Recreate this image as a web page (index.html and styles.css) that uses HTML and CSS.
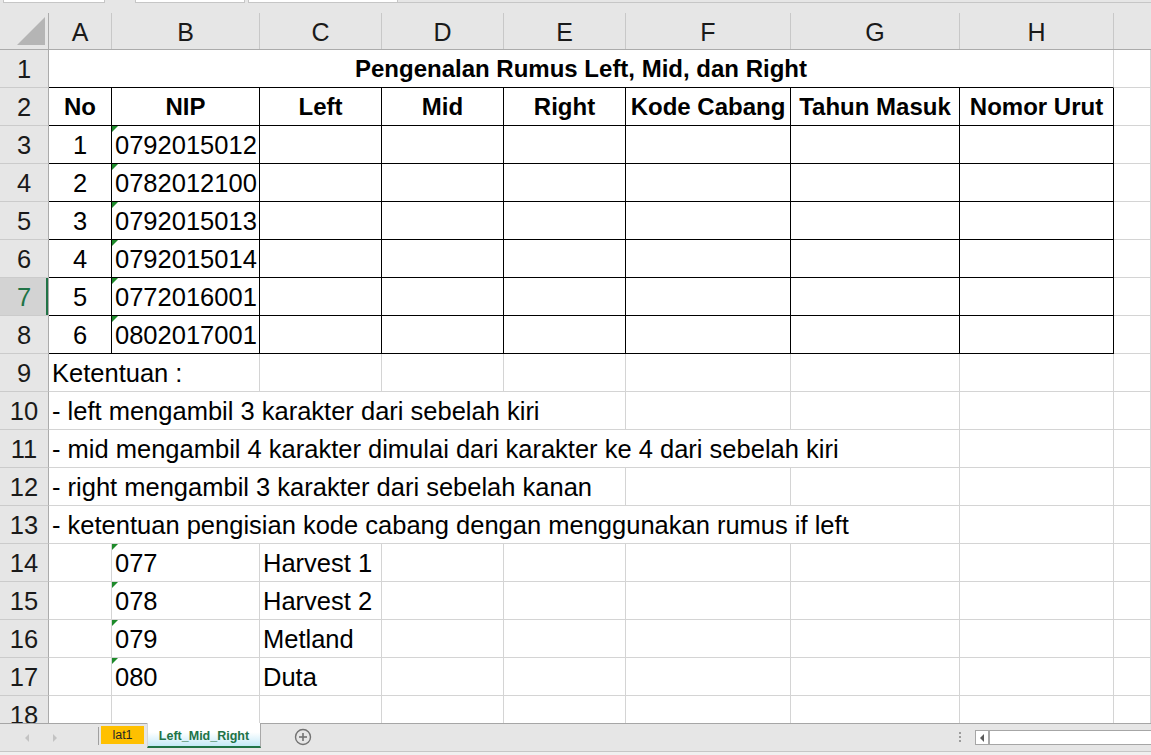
FILE: index.html
```html
<!DOCTYPE html>
<html>
<head>
<meta charset="utf-8">
<title>Left_Mid_Right</title>
<link rel="stylesheet" href="styles.css">
</head>
<body>
<div class="app">
  <div class="topstrip">
    <div class="tbox tbox1"></div>
    <div class="tbox tbox2"></div>
    <div class="tbox tbox3"></div>
    <div class="tline"></div>
  </div>

  <div class="sheet">
    <!-- column headers -->
    <div class="ch"><div class="chi corner"><svg class="corner-tri" width="48" height="35" viewBox="0 0 48 35"><polygon points="17,32 45,4 45,32" fill="#b5b5b5"/></svg></div></div>
    <div class="ch"><div class="chi">A</div></div>
    <div class="ch"><div class="chi">B</div></div>
    <div class="ch"><div class="chi">C</div></div>
    <div class="ch"><div class="chi">D</div></div>
    <div class="ch"><div class="chi">E</div></div>
    <div class="ch"><div class="chi">F</div></div>
    <div class="ch"><div class="chi">G</div></div>
    <div class="ch"><div class="chi">H</div></div>
    <div class="ch"><div class="chi nosep"></div></div>

    <!-- row 1 -->
    <div class="rh">1</div>
    <div class="c span8 title">Pengenalan Rumus Left, Mid, dan Right</div>
    <div class="c"></div>

    <!-- row 2 -->
    <div class="rh">2</div>
    <div class="c t hd">No</div>
    <div class="c t hd">NIP</div>
    <div class="c t hd">Left</div>
    <div class="c t hd">Mid</div>
    <div class="c t hd">Right</div>
    <div class="c t hd">Kode Cabang</div>
    <div class="c t hd">Tahun Masuk</div>
    <div class="c t hd">Nomor Urut</div>
    <div class="c"></div>

    <!-- row 3 -->
    <div class="rh">3</div>
    <div class="c t ctr">1</div>
    <div class="c t tri">0792015012</div>
    <div class="c t"></div><div class="c t"></div><div class="c t"></div><div class="c t"></div><div class="c t"></div><div class="c t"></div>
    <div class="c"></div>

    <!-- row 4 -->
    <div class="rh">4</div>
    <div class="c t ctr">2</div>
    <div class="c t tri">0782012100</div>
    <div class="c t"></div><div class="c t"></div><div class="c t"></div><div class="c t"></div><div class="c t"></div><div class="c t"></div>
    <div class="c"></div>

    <!-- row 5 -->
    <div class="rh">5</div>
    <div class="c t ctr">3</div>
    <div class="c t tri">0792015013</div>
    <div class="c t"></div><div class="c t"></div><div class="c t"></div><div class="c t"></div><div class="c t"></div><div class="c t"></div>
    <div class="c"></div>

    <!-- row 6 -->
    <div class="rh">6</div>
    <div class="c t ctr">4</div>
    <div class="c t tri">0792015014</div>
    <div class="c t"></div><div class="c t"></div><div class="c t"></div><div class="c t"></div><div class="c t"></div><div class="c t"></div>
    <div class="c"></div>

    <!-- row 7 -->
    <div class="rh rh-active">7</div>
    <div class="c t ctr">5</div>
    <div class="c t tri">0772016001</div>
    <div class="c t"></div><div class="c t"></div><div class="c t"></div><div class="c t"></div><div class="c t"></div><div class="c t"></div>
    <div class="c"></div>

    <!-- row 8 -->
    <div class="rh">8</div>
    <div class="c t ctr">6</div>
    <div class="c t tri">0802017001</div>
    <div class="c t"></div><div class="c t"></div><div class="c t"></div><div class="c t"></div><div class="c t"></div><div class="c t"></div>
    <div class="c"></div>

    <!-- row 9 -->
    <div class="rh">9</div>
    <div class="c span2">Ketentuan :</div>
    <div class="c"></div><div class="c"></div><div class="c"></div><div class="c"></div><div class="c"></div><div class="c"></div>
    <div class="c"></div>

    <!-- row 10 -->
    <div class="rh">10</div>
    <div class="c span5">- left mengambil 3 karakter dari sebelah kiri</div>
    <div class="c"></div><div class="c"></div><div class="c"></div>
    <div class="c"></div>

    <!-- row 11 -->
    <div class="rh">11</div>
    <div class="c span7">- mid mengambil 4 karakter dimulai dari karakter ke 4 dari sebelah kiri</div>
    <div class="c"></div>
    <div class="c"></div>

    <!-- row 12 -->
    <div class="rh">12</div>
    <div class="c span5">- right mengambil 3 karakter dari sebelah kanan</div>
    <div class="c"></div><div class="c"></div><div class="c"></div>
    <div class="c"></div>

    <!-- row 13 -->
    <div class="rh">13</div>
    <div class="c span7">- ketentuan pengisian kode cabang dengan menggunakan rumus if left</div>
    <div class="c"></div>
    <div class="c"></div>

    <!-- row 14 -->
    <div class="rh">14</div>
    <div class="c"></div>
    <div class="c tri">077</div>
    <div class="c">Harvest 1</div>
    <div class="c"></div><div class="c"></div><div class="c"></div><div class="c"></div><div class="c"></div>
    <div class="c"></div>

    <!-- row 15 -->
    <div class="rh">15</div>
    <div class="c"></div>
    <div class="c tri">078</div>
    <div class="c">Harvest 2</div>
    <div class="c"></div><div class="c"></div><div class="c"></div><div class="c"></div><div class="c"></div>
    <div class="c"></div>

    <!-- row 16 -->
    <div class="rh">16</div>
    <div class="c"></div>
    <div class="c tri">079</div>
    <div class="c">Metland</div>
    <div class="c"></div><div class="c"></div><div class="c"></div><div class="c"></div><div class="c"></div>
    <div class="c"></div>

    <!-- row 17 -->
    <div class="rh">17</div>
    <div class="c"></div>
    <div class="c tri">080</div>
    <div class="c">Duta</div>
    <div class="c"></div><div class="c"></div><div class="c"></div><div class="c"></div><div class="c"></div>
    <div class="c"></div>

    <!-- row 18 -->
    <div class="rh">18</div>
    <div class="c"></div><div class="c"></div><div class="c"></div><div class="c"></div><div class="c"></div><div class="c"></div><div class="c"></div><div class="c"></div>
    <div class="c"></div>
  </div>

  <div class="tabbar">
    <div class="nav">
      <svg class="nav-arrow" width="8" height="10" viewBox="0 0 8 10"><polygon points="6,1 2,5 6,9" fill="#c3c3c3"/></svg>
      <svg class="nav-arrow" width="8" height="10" viewBox="0 0 8 10"><polygon points="2,1 6,5 2,9" fill="#c3c3c3"/></svg>
    </div>
    <div class="tabsep"></div>
    <div class="tab tab-lat1">lat1</div>
    <div class="tab tab-active">Left_Mid_Right</div>
    <div class="addsheet">
      <svg width="18" height="18" viewBox="0 0 18 18"><circle cx="9" cy="9" r="7.5" fill="none" stroke="#727272" stroke-width="1.4"/><line x1="9" y1="5" x2="9" y2="13" stroke="#727272" stroke-width="1.6"/><line x1="5" y1="9" x2="13" y2="9" stroke="#727272" stroke-width="1.6"/></svg>
    </div>
    <div class="spacer"></div>
    <div class="dots"><span></span><span></span><span></span></div>
    <div class="hscroll">
      <div class="hs-btn"><svg width="8" height="10" viewBox="0 0 8 10"><polygon points="6,1 2,5 6,9" fill="#5a5a5a"/></svg></div>
      <div class="hs-track"></div>
    </div>
  </div>
  <div class="bottomstrip"></div>
</div>
</body>
</html>
```

FILE: styles.css
```css
* {
  box-sizing: border-box;
}

html, body {
  margin: 0;
  padding: 0;
  background: #ffffff;
}

body {
  width: 1151px;
  height: 755px;
  overflow: hidden;
  font-family: "Liberation Sans", Arial, sans-serif;
  color: #000;
}

.app {
  width: 1151px;
  height: 755px;
  display: flex;
  flex-direction: column;
  overflow: hidden;
}

/* top strip (edge of the formula bar) */
.topstrip {
  height: 3px;
  flex: none;
  display: flex;
  background: #e6e6e6;
}

.tbox {
  height: 3px;
  background: #ffffff;
  border-bottom: 1px solid #c6c6c6;
  border-left: 1px solid #c6c6c6;
  border-right: 1px solid #c6c6c6;
}

.tbox1 {
  margin-left: 3px;
  width: 102px;
}

.tbox2 {
  margin-left: 30px;
  width: 110px;
}

.tbox3 {
  margin-left: 3px;
  width: 150px;
}

.tline {
  flex: 1;
  height: 3px;
  border-bottom: 1px solid #c6c6c6;
}

/* grid */
.sheet {
  flex: none;
  height: 720px;
  overflow: hidden;
  display: grid;
  grid-template-columns: 49px 63px 148px 122px 122px 122px 165px 169px 154px 1fr;
  grid-template-rows: 47px repeat(18, 38px);
  font-size: 25.5px;
}

.ch {
  background: #e6e6e6;
  border-bottom: 1px solid #ababab;
  padding-top: 10px;
}

.chi {
  height: 36px;
  border-right: 1px solid #c8c8c8;
  padding-top: 3px;
  line-height: 33px;
  text-align: center;
  font-size: 25px;
  color: #1a1a1a;
}

.chi.corner {
  border-right-color: #ababab;
  padding-top: 0;
}

.chi.nosep {
  border-right: none;
}

.corner-tri {
  display: block;
}

.rh {
  background: #e6e6e6;
  border-right: 1px solid #ababab;
  border-bottom: 1px solid #cbcbcb;
  text-align: center;
  padding-top: 1px;
  line-height: 36px;
  font-size: 25.5px;
  color: #1a1a1a;
}

.rh-active {
  background: #d3d3d3;
  color: #217346;
  box-shadow: inset -2px 0 0 #217346;
}

.c {
  position: relative;
  border-right: 1px solid #d4d4d4;
  border-bottom: 1px solid #d4d4d4;
  padding: 1px 3px 0 3px;
  line-height: 36px;
  white-space: nowrap;
  overflow: visible;
}

.t {
  border-right-color: #000;
  border-bottom-color: #000;
}

.ctr {
  text-align: center;
}

.hd {
  text-align: center;
  font-weight: bold;
  font-size: 24px;
  padding-left: 0;
  padding-right: 0;
}

.title {
  text-align: center;
  font-weight: bold;
  font-size: 24px;
  border-bottom-color: #000;
}

.span2 { grid-column: span 2; }
.span5 { grid-column: span 5; }
.span7 { grid-column: span 7; }
.span8 { grid-column: span 8; }

.tri::before {
  content: "";
  position: absolute;
  left: 0;
  top: 0;
  width: 0;
  height: 0;
  border-top: 6px solid #1d8a2a;
  border-right: 6px solid transparent;
}

/* sheet tab bar */
.tabbar {
  flex: none;
  height: 29px;
  display: flex;
  align-items: flex-start;
  background: #e6e6e6;
  border-top: 1px solid #a6a6a6;
  border-bottom: 1px solid #c6c6c6;
}

.nav {
  width: 98px;
  height: 27px;
  display: flex;
  align-items: center;
  padding-left: 23px;
  gap: 20px;
}

.nav-arrow {
  display: block;
}

.tabsep {
  width: 1px;
  height: 18px;
  margin-top: 3px;
  background: #a0a0a0;
}

.tab {
  font-size: 12.5px;
  display: flex;
  align-items: center;
  justify-content: center;
}

.tab-lat1 {
  margin-left: 2px;
  margin-top: 2px;
  width: 43px;
  height: 18px;
  background: #ffc000;
  color: #262626;
}

.tab-active {
  margin-left: 3px;
  margin-top: -1px;
  width: 114px;
  height: 25px;
  background: linear-gradient(to bottom, #ffffff 0%, #ffffff 40%, #c4e9f7 100%);
  border-left: 1px solid #d6d6d6;
  border-right: 1px solid #a8a8a8;
  border-bottom: 2px solid #217346;
  color: #217346;
  font-weight: bold;
  padding-top: 2px;
}

.addsheet {
  margin-left: 33px;
  margin-top: 4px;
  width: 18px;
  height: 18px;
}

.addsheet svg {
  display: block;
}

.spacer {
  flex: 1;
}

.dots {
  width: 2px;
  margin-top: 8px;
  display: flex;
  flex-direction: column;
  gap: 2px;
}

.dots span {
  display: block;
  width: 2px;
  height: 2px;
  background: #9c9c9c;
}

.hscroll {
  margin-left: 14px;
  margin-top: 6px;
  width: 176px;
  height: 15px;
  display: flex;
  background: #ffffff;
  border: 1px solid #a6a6a6;
  border-right: none;
}

.hs-btn {
  width: 14px;
  height: 13px;
  display: flex;
  align-items: center;
  justify-content: center;
  border-right: 2px solid #a8a8a8;
}

.hs-btn svg {
  display: block;
}

.hs-track {
  flex: 1;
}

.bottomstrip {
  flex: 1;
  background: #f0f0f0;
}
```
